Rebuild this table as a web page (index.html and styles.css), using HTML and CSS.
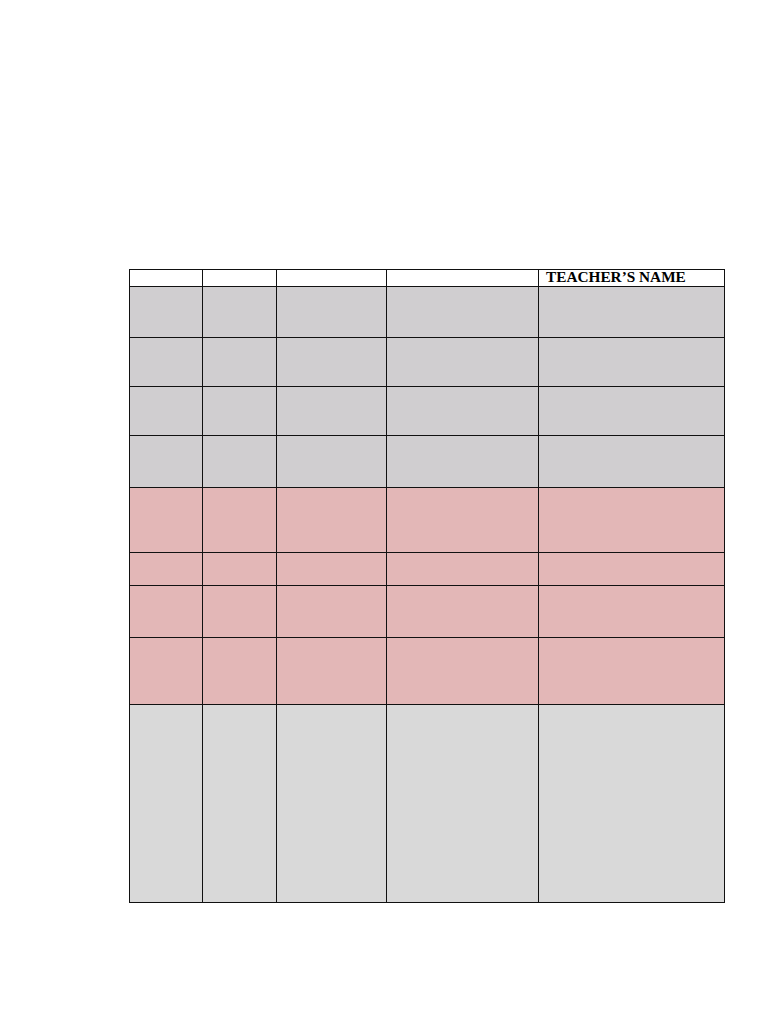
FILE: index.html
```html
<!DOCTYPE html>
<html>
<head>
<meta charset="utf-8">
<link rel="stylesheet" href="styles.css">
</head>
<body>
<div class="sheet">
  <div class="grid">
    <div class="c hd"></div><div class="c hd"></div><div class="c hd"></div><div class="c hd"></div><div class="c hd name">TEACHER’S NAME</div>
    <div class="c g"></div><div class="c g"></div><div class="c g"></div><div class="c g"></div><div class="c g"></div>
    <div class="c g"></div><div class="c g"></div><div class="c g"></div><div class="c g"></div><div class="c g"></div>
    <div class="c g"></div><div class="c g"></div><div class="c g"></div><div class="c g"></div><div class="c g"></div>
    <div class="c g"></div><div class="c g"></div><div class="c g"></div><div class="c g"></div><div class="c g"></div>
    <div class="c p"></div><div class="c p"></div><div class="c p"></div><div class="c p"></div><div class="c p"></div>
    <div class="c p"></div><div class="c p"></div><div class="c p"></div><div class="c p"></div><div class="c p"></div>
    <div class="c p"></div><div class="c p"></div><div class="c p"></div><div class="c p"></div><div class="c p"></div>
    <div class="c p"></div><div class="c p"></div><div class="c p"></div><div class="c p"></div><div class="c p"></div>
    <div class="c l"></div><div class="c l"></div><div class="c l"></div><div class="c l"></div><div class="c l"></div>
  </div>
</div>
</body>
</html>
```
FILE: styles.css
```css
html, body {
  margin: 0;
  padding: 0;
  background: #ffffff;
}
.sheet {
  padding: 269px 0 0 129px;
}
.grid {
  display: grid;
  width: 596px;
  box-sizing: border-box;
  grid-template-columns: 72px 73px 109px 151px 185px;
  grid-template-rows: 16px 50px 48px 48px 51px 64px 32px 51px 66px 197px;
  gap: 1px;
  padding: 1px;
  background: #111111;
}
.c {
  box-sizing: border-box;
}
.hd { background: #ffffff; }
.g { background: #d0ced0; }
.p { background: #e3b7b7; }
.l { background: #d9d9d9; }
.name {
  font-family: "Liberation Serif", "Times New Roman", serif;
  font-weight: bold;
  font-size: 15.3px;
  line-height: 14px;
  padding-left: 7px;
  color: #000;
  white-space: nowrap;
}
```
